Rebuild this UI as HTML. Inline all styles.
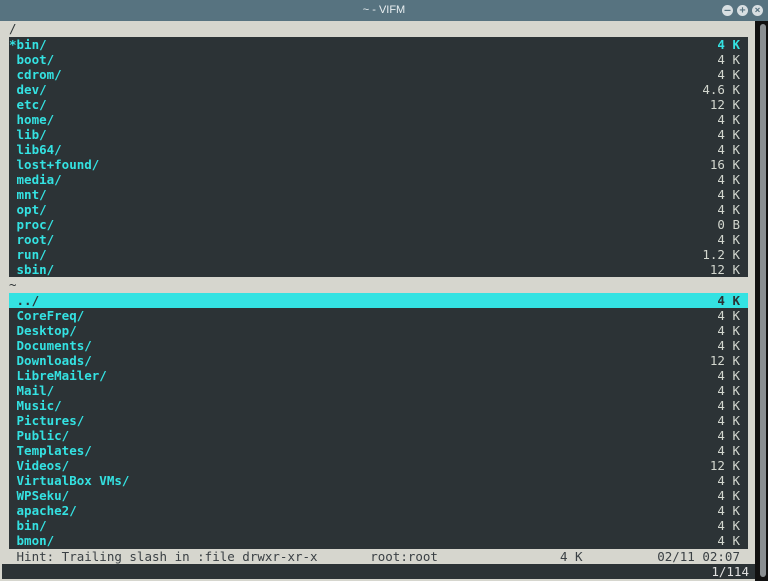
<!DOCTYPE html><html><head><style>
*{margin:0;padding:0;box-sizing:border-box}
body{width:768px;height:581px;overflow:hidden;background:#d6d6ce;position:relative;font-family:"DejaVu Sans Mono","Liberation Mono",monospace;font-size:12.5px;line-height:15px}
#title{position:absolute;left:0;top:0;width:768px;height:21px;background:#577380;color:#e8eef0;font-family:"Liberation Sans",sans-serif;font-size:11px;text-align:center;line-height:21px}
.btn{position:absolute;top:5px;width:11px;height:11px;border-radius:50%;background:#d8dfe2;color:#577380;font-size:10px;line-height:11px;text-align:center;font-weight:bold}
#term{position:absolute;left:2px;top:21px;width:753px;height:558px;background:#d6d6ce}
#sb{position:absolute;left:755px;top:21px;width:13px;height:560px;background:#111}
#thumb{position:absolute;left:760px;top:24px;width:6px;height:553px;background:#8a8f92;border-radius:3px}
.bar{position:absolute;left:9px;width:739px;height:15px;color:#2e3436;padding-left:0}
.panel{position:absolute;left:9px;width:739px;background:#2c3336}
.r{height:15px;position:relative;color:#34e2e2;font-weight:bold;white-space:pre}
.r span{position:absolute;right:8px;top:0;color:#d3d7cf;font-weight:normal}
.r.b span{color:#34e2e2;font-weight:bold}
.r.hl{background:#34e2e2;color:#2c3336}
.r.hl span{color:#2c3336;font-weight:bold}
</style></head><body>
<div id="title">~ - VIFM</div>
<div class="btn" style="left:722px">–</div><div class="btn" style="left:737px">+</div><div class="btn" style="left:752px">×</div>
<div id="term"></div>
<div id="sb"></div><div id="thumb"></div>
<div class="bar" style="top:21px">/</div>
<div class="panel" style="top:37px;height:240px">
<div class="r b">*bin/<span>4 K</span></div>
<div class="r"> boot/<span>4 K</span></div>
<div class="r"> cdrom/<span>4 K</span></div>
<div class="r"> dev/<span>4.6 K</span></div>
<div class="r"> etc/<span>12 K</span></div>
<div class="r"> home/<span>4 K</span></div>
<div class="r"> lib/<span>4 K</span></div>
<div class="r"> lib64/<span>4 K</span></div>
<div class="r"> lost+found/<span>16 K</span></div>
<div class="r"> media/<span>4 K</span></div>
<div class="r"> mnt/<span>4 K</span></div>
<div class="r"> opt/<span>4 K</span></div>
<div class="r"> proc/<span>0 B</span></div>
<div class="r"> root/<span>4 K</span></div>
<div class="r"> run/<span>1.2 K</span></div>
<div class="r"> sbin/<span>12 K</span></div>
</div>
<div class="bar" style="top:277px">~</div>
<div class="panel" style="top:293px;height:256px">
<div class="r hl"> ../<span>4 K</span></div>
<div class="r"> CoreFreq/<span>4 K</span></div>
<div class="r"> Desktop/<span>4 K</span></div>
<div class="r"> Documents/<span>4 K</span></div>
<div class="r"> Downloads/<span>12 K</span></div>
<div class="r"> LibreMailer/<span>4 K</span></div>
<div class="r"> Mail/<span>4 K</span></div>
<div class="r"> Music/<span>4 K</span></div>
<div class="r"> Pictures/<span>4 K</span></div>
<div class="r"> Public/<span>4 K</span></div>
<div class="r"> Templates/<span>4 K</span></div>
<div class="r"> Videos/<span>12 K</span></div>
<div class="r"> VirtualBox VMs/<span>4 K</span></div>
<div class="r"> WPSeku/<span>4 K</span></div>
<div class="r"> apache2/<span>4 K</span></div>
<div class="r"> bin/<span>4 K</span></div>
<div class="r"> bmon/<span>4 K</span></div>
</div>
<div class="bar" style="top:549px;white-space:pre;color:#3a4044"> Hint: Trailing slash in :file drwxr-xr-x       root:root<span style="position:absolute;left:551px">4 K</span><span style="position:absolute;right:8px">02/11 02:07</span></div>
<div style="position:absolute;left:2px;top:564px;width:753px;height:15px;background:#2c3336;color:#e0e0e0"><span style="position:absolute;right:6px">1/114</span></div>
</body></html>
